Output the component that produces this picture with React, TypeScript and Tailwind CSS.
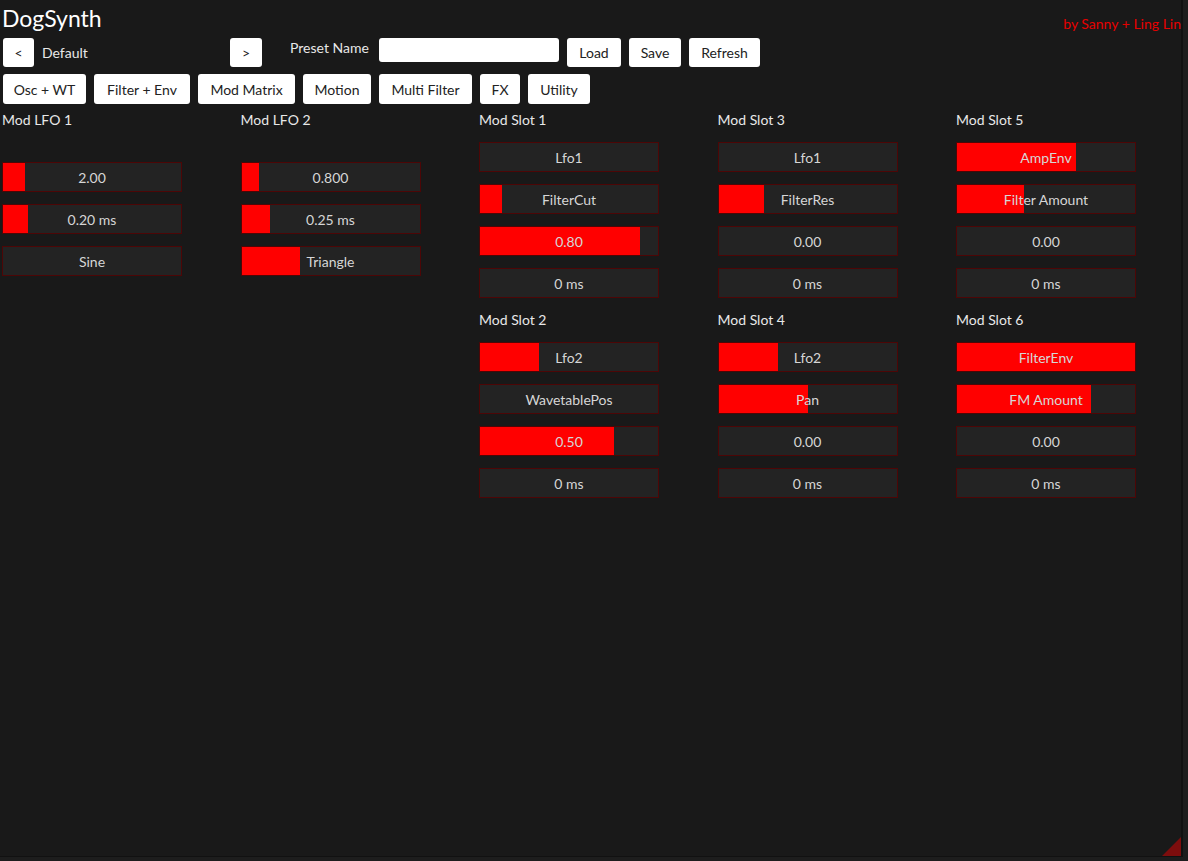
import React from "react";

type S = { label: string; fill: number };

function Slider({ label, fill }: S) {
  return (
    <div className="relative w-[180px] h-[30px] bg-[#232323] border border-[#4d0606]">
      <div className="absolute left-0 top-0 bottom-0 bg-[#ff0000]" style={{ width: fill }} />
      <div className="relative h-full flex items-center justify-center text-[14px] text-[#d6d6d6]">{label}</div>
    </div>
  );
}

function Btn({ label, w, h }: { label: string; w: string; h: string }) {
  return (
    <div className={`${w} ${h} shrink-0 bg-white rounded-[3px] flex items-center justify-center text-[14px] text-[#222]`}>{label}</div>
  );
}

function Section({ title, items, spacer }: { title: string; items: S[]; spacer?: boolean }) {
  return (
    <div className="flex flex-col gap-[12px]">
      <div className="h-[20px] leading-[20px] text-[14px] text-[#e8e8e8]">{title}</div>
      {spacer && <div className="h-[8px]" />}
      {items.map((it, i) => (
        <Slider key={i} {...it} />
      ))}
    </div>
  );
}

export default function App() {
  const col = "w-[238.5px] shrink-0 flex flex-col gap-[12px]";
  return (
    <div className="w-[1188px] h-[861px] bg-[#1d1d1d] font-['Lato',sans-serif] overflow-hidden">
      <div className="relative w-[1183px] h-[857px] bg-[#191919] border-r-2 border-b border-[#111111] pl-[2px]">
        <div className="flex justify-between h-[38px]">
          <div className="text-[23px] leading-[36px] text-white">DogSynth</div>
          <div className="text-[14px] leading-[48px] text-[#e60000]">by Sanny + Ling Lin</div>
        </div>
        <div className="flex items-start h-[36px] pl-[1px]">
          <Btn label="<" w="w-[31px]" h="h-[29px]" />
          <div className="w-[196px] shrink-0 pl-[8px] h-[29px] flex items-center text-[14px] text-[#e8e8e8]">Default</div>
          <Btn label=">" w="w-[32px]" h="h-[29px]" />
          <div className="ml-[28px] w-[89px] shrink-0 h-[20px] leading-[20px] text-[14px] text-[#e8e8e8]">Preset Name</div>
          <div className="w-[180px] shrink-0 h-[24px] bg-white rounded-[3px]" />
          <div className="ml-[8px] flex gap-[8px]">
            <Btn label="Load" w="w-[54px]" h="h-[29px]" />
            <Btn label="Save" w="w-[52px]" h="h-[29px]" />
            <Btn label="Refresh" w="w-[71px]" h="h-[29px]" />
          </div>
        </div>
        <div className="flex gap-[8px] h-[36px] pl-[1px]">
          <Btn label="Osc + WT" w="w-[83px]" h="h-[30px]" />
          <Btn label="Filter + Env" w="w-[96px]" h="h-[30px]" />
          <Btn label="Mod Matrix" w="w-[97px]" h="h-[30px]" />
          <Btn label="Motion" w="w-[68px]" h="h-[30px]" />
          <Btn label="Multi Filter" w="w-[93px]" h="h-[30px]" />
          <Btn label="FX" w="w-[40px]" h="h-[30px]" />
          <Btn label="Utility" w="w-[62px]" h="h-[30px]" />
        </div>
        <div className="flex">
          <div className={col}>
            <Section
              title="Mod LFO 1"
              spacer
              items={[
                { label: "2.00", fill: 22 },
                { label: "0.20 ms", fill: 25 },
                { label: "Sine", fill: 0 },
              ]}
            />
          </div>
          <div className={col}>
            <Section
              title="Mod LFO 2"
              spacer
              items={[
                { label: "0.800", fill: 17 },
                { label: "0.25 ms", fill: 28 },
                { label: "Triangle", fill: 58 },
              ]}
            />
          </div>
          <div className={col}>
            <Section
              title="Mod Slot 1"
              items={[
                { label: "Lfo1", fill: 0 },
                { label: "FilterCut", fill: 22 },
                { label: "0.80", fill: 160 },
                { label: "0 ms", fill: 0 },
              ]}
            />
            <Section
              title="Mod Slot 2"
              items={[
                { label: "Lfo2", fill: 59 },
                { label: "WavetablePos", fill: 0 },
                { label: "0.50", fill: 134 },
                { label: "0 ms", fill: 0 },
              ]}
            />
          </div>
          <div className={col}>
            <Section
              title="Mod Slot 3"
              items={[
                { label: "Lfo1", fill: 0 },
                { label: "FilterRes", fill: 45 },
                { label: "0.00", fill: 0 },
                { label: "0 ms", fill: 0 },
              ]}
            />
            <Section
              title="Mod Slot 4"
              items={[
                { label: "Lfo2", fill: 59 },
                { label: "Pan", fill: 89 },
                { label: "0.00", fill: 0 },
                { label: "0 ms", fill: 0 },
              ]}
            />
          </div>
          <div className={col}>
            <Section
              title="Mod Slot 5"
              items={[
                { label: "AmpEnv", fill: 119 },
                { label: "Filter Amount", fill: 67 },
                { label: "0.00", fill: 0 },
                { label: "0 ms", fill: 0 },
              ]}
            />
            <Section
              title="Mod Slot 6"
              items={[
                { label: "FilterEnv", fill: 178 },
                { label: "FM Amount", fill: 134 },
                { label: "0.00", fill: 0 },
                { label: "0 ms", fill: 0 },
              ]}
            />
          </div>
        </div>
        <svg className="absolute right-0 bottom-0" width="19" height="19" viewBox="0 0 19 19">
          <polygon points="0,19 19,19 19,0" fill="#7d0d0d" />
        </svg>
      </div>
    </div>
  );
}
